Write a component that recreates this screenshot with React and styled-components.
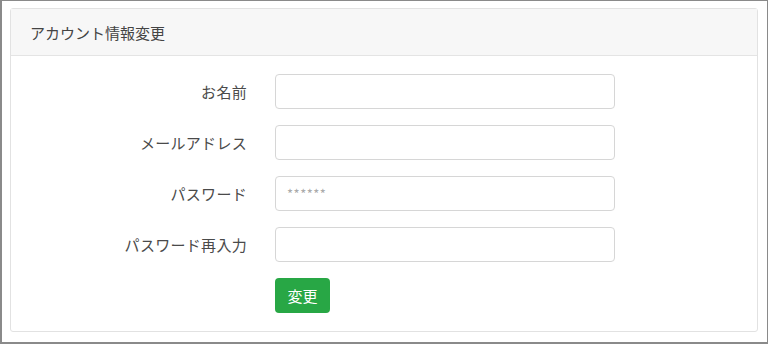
import React from "react";
import styled, { createGlobalStyle } from "styled-components";

const GlobalStyle = createGlobalStyle`
  html, body {
    margin: 0;
    padding: 0;
    background: #fff;
  }
  body {
    font-family: "Noto Sans CJK JP", "Noto Sans", sans-serif;
    color: #444;
  }
`;

// 外枠
const Frame = styled.div`
  box-sizing: border-box;
  width: 768px;
  height: 344px;
  padding: 7px 9px 10px 8px;
  border: 1px solid #8a8a8a;
  border-left-width: 2px;
  border-bottom-width: 2px;
`;

const Card = styled.div`
  box-sizing: border-box;
  height: 100%;
  border: 1px solid #e2e2e2;
  border-radius: 3px;
  background: #fff;
`;

const CardHeader = styled.div`
  box-sizing: border-box;
  height: 47px;
  display: flex;
  align-items: center;
  padding: 0 19px;
  background: #f7f7f7;
  border-bottom: 1px solid #e4e4e4;
  font-size: 15px;
  color: #444;
`;

const CardBody = styled.form`
  display: grid;
  grid-template-columns: 216px 340px;
  column-gap: 28px;
  row-gap: 16px;
  padding: 18px 20px 19px 20px;
  align-items: center;
`;

const Label = styled.label`
  text-align: right;
  font-size: 15px;
  color: #4a4a4a;
  white-space: nowrap;
  letter-spacing: 0.3px;
`;

const Input = styled.input`
  box-sizing: border-box;
  width: 340px;
  height: 35px;
  padding: 0 11px;
  border: 1px solid #d6d6d6;
  border-radius: 4px;
  font-family: inherit;
  font-size: 13px;
  outline: none;

  &::placeholder {
    color: #aaa;
    letter-spacing: 0.5px;
  }
`;

const Button = styled.button`
  grid-column: 2;
  justify-self: start;
  width: 55px;
  height: 35px;
  border: none;
  border-radius: 4px;
  background: #28a745;
  color: #fff;
  font-family: inherit;
  font-size: 15px;
  cursor: pointer;
`;

const fields = [
  { id: "name", label: "お名前", type: "text" },
  { id: "email", label: "メールアドレス", type: "email" },
  { id: "password", label: "パスワード", type: "password", placeholder: "******" },
  { id: "password2", label: "パスワード再入力", type: "password" },
];

const App = () => {
  return (
    <>
      <GlobalStyle />
      <Frame>
        <Card>
          <CardHeader>アカウント情報変更</CardHeader>
          <CardBody onSubmit={(e) => e.preventDefault()}>
            {fields.map((f) => (
              <React.Fragment key={f.id}>
                <Label htmlFor={f.id}>{f.label}</Label>
                <Input id={f.id} type={f.type} placeholder={f.placeholder} />
              </React.Fragment>
            ))}
            <Button type="submit">変更</Button>
          </CardBody>
        </Card>
      </Frame>
    </>
  );
};

export default App;
